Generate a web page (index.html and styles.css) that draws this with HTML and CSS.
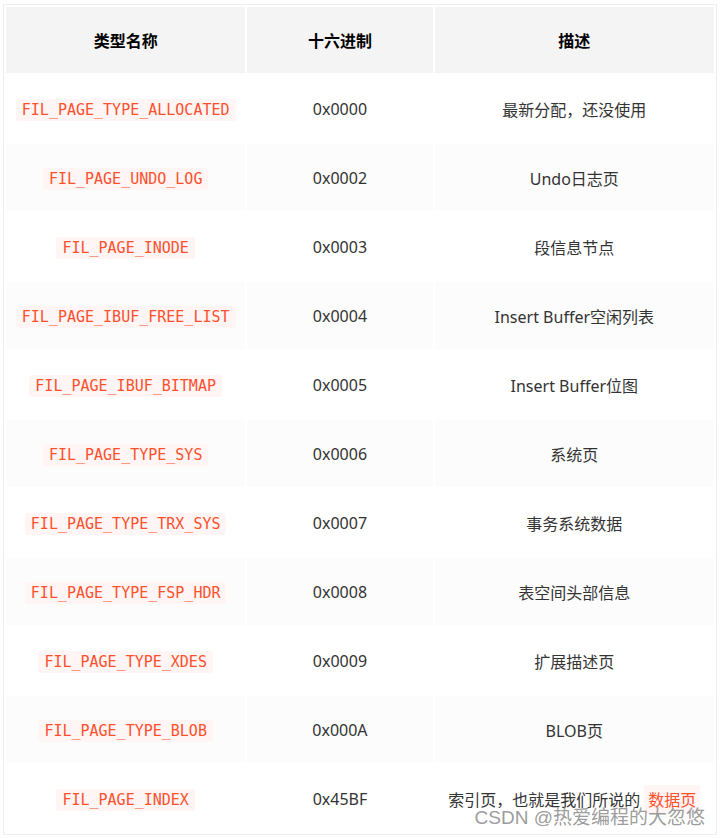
FILE: index.html
```html
<!DOCTYPE html>
<html lang="zh-CN">
<head>
<meta charset="utf-8">
<title>页类型</title>
<link rel="stylesheet" href="styles.css">
</head>
<body>
<div class="wrap">
<table class="tbl">
  <colgroup>
    <col class="c1"><col class="c2"><col class="c3">
  </colgroup>
  <thead>
    <tr><th>类型名称</th><th>十六进制</th><th>描述</th></tr>
  </thead>
  <tbody>
    <tr><td><code>FIL_PAGE_TYPE_ALLOCATED</code></td><td>0x0000</td><td>最新分配，还没使用</td></tr>
    <tr><td><code>FIL_PAGE_UNDO_LOG</code></td><td>0x0002</td><td>Undo日志页</td></tr>
    <tr><td><code>FIL_PAGE_INODE</code></td><td>0x0003</td><td>段信息节点</td></tr>
    <tr><td><code>FIL_PAGE_IBUF_FREE_LIST</code></td><td>0x0004</td><td>Insert Buffer空闲列表</td></tr>
    <tr><td><code>FIL_PAGE_IBUF_BITMAP</code></td><td>0x0005</td><td>Insert Buffer位图</td></tr>
    <tr><td><code>FIL_PAGE_TYPE_SYS</code></td><td>0x0006</td><td>系统页</td></tr>
    <tr><td><code>FIL_PAGE_TYPE_TRX_SYS</code></td><td>0x0007</td><td>事务系统数据</td></tr>
    <tr><td><code>FIL_PAGE_TYPE_FSP_HDR</code></td><td>0x0008</td><td>表空间头部信息</td></tr>
    <tr><td><code>FIL_PAGE_TYPE_XDES</code></td><td>0x0009</td><td>扩展描述页</td></tr>
    <tr><td><code>FIL_PAGE_TYPE_BLOB</code></td><td>0x000A</td><td>BLOB页</td></tr>
    <tr><td><code>FIL_PAGE_INDEX</code></td><td>0x45BF</td><td>索引页，也就是我们所说的 <code class="cjk">数据页</code></td></tr>
  </tbody>
</table>
<div class="watermark">CSDN @热爱编程的大忽悠</div>
</div>
</body>
</html>
```

FILE: styles.css
```css
html, body {
  margin: 0;
  padding: 0;
  background: #ffffff;
}
body {
  font-family: "Noto Sans", "Noto Sans CJK SC", sans-serif;
  color: #333333;
}
.wrap {
  position: relative;
  padding: 4px 3px;
  width: 714px;
}
.tbl {
  border: 1px solid #eeeeee;
  border-collapse: separate;
  border-spacing: 2px;
  table-layout: fixed;
  width: 714px;
}
.c1 { width: 239px; }
.c2 { width: 185px; }
.c3 { width: 279px; }
.tbl th {
  height: 66px;
  padding: 0;
  background: #f4f4f4;
  color: #000000;
  font-family: "Noto Sans CJK SC", sans-serif;
  font-weight: 700;
  font-size: 16px;
  text-align: center;
  vertical-align: middle;
}
.tbl td {
  height: 67px;
  padding: 0;
  font-size: 16px;
  text-align: center;
  vertical-align: middle;
  white-space: nowrap;
  background: #ffffff;
}
.tbl tbody tr:nth-child(even) td {
  background: #fcfcfc;
}
.tbl code {
  font-family: "DejaVu Sans Mono", monospace;
  font-size: 15px;
  color: #ff502c;
  background: #fff5f5;
  border-radius: 3px;
  padding: 2px 6px;
  line-height: 16px;
}
.tbl code.cjk {
  font-family: "Noto Sans CJK SC", sans-serif;
  font-size: 16px;
  padding: 2px 4px;
}
.watermark {
  position: absolute;
  right: 15px;
  top: 805px;
  font-family: "Liberation Sans", "Noto Sans CJK SC", sans-serif;
  font-size: 19px;
  line-height: 26px;
  color: rgba(130, 130, 130, 0.8);
}
```
